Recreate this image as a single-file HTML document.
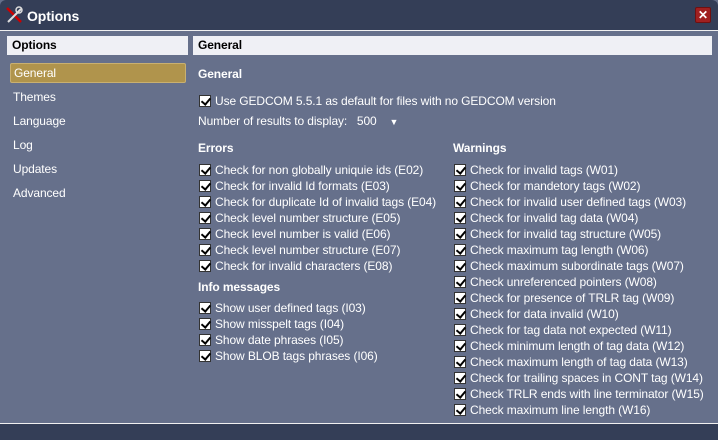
<!DOCTYPE html>
<html><head><style>
*{margin:0;padding:0;box-sizing:border-box}
body{width:718px;height:440px;overflow:hidden;background:#66708b;font-family:"Liberation Sans",sans-serif;font-size:12px;color:#fff;position:relative;letter-spacing:-0.1px}
.abs{position:absolute;white-space:nowrap}
.title{left:0;top:0;width:718px;height:30px;background:#343e57;border-radius:6px 6px 0 0}
.tline{left:0;top:30px;width:718px;height:1px;background:#f0f0f0}
.bot{left:0;top:423px;width:718px;height:17px;background:#343e57;border-top:1px solid #f0f0f0}
.hdr{background:#eff0f5;color:#000;font-weight:bold;height:19px;line-height:19px;padding-left:5px;font-size:12px}
.cb{display:inline-block;width:12px;height:12px;background:#fff;border:1px solid #333;vertical-align:-2px;margin-right:4px;position:relative}
.cb:after{content:"";position:absolute;left:3px;top:0px;width:4px;height:7px;border:solid #000;border-width:0 2px 2px 0;transform:rotate(40deg)}
.row{height:16px;line-height:16px}
b{font-weight:bold}
</style></head><body>
<div class="abs title"></div>
<svg class="abs" style="left:5px;top:6px" width="18" height="18" viewBox="0 0 18 18"><path d="M2 2 L16 16" stroke="#c00" stroke-width="2.5"/><path d="M16 3 L3 16" stroke="#ddd" stroke-width="2"/><circle cx="14" cy="4" r="3" fill="none" stroke="#ddd" stroke-width="1.5"/></svg>
<div class="abs" style="left:27px;top:8px;font-weight:bold;font-size:14px">Options</div>
<div class="abs" style="left:695px;top:7px;width:16px;height:16px;background:#a02020;border-radius:2px;border:1px solid #701010;color:#fff;font-weight:bold;font-size:12px;line-height:14px;text-align:center">✕</div>
<div class="abs tline"></div>
<div class="abs hdr" style="left:7px;top:36px;width:181px">Options</div>
<div class="abs hdr" style="left:193px;top:36px;width:519px">General</div>
<div class="abs" style="left:10px;top:63px;width:176px;height:20px;background:#b0944c;border:1px solid #c9b070;border-radius:2px;padding-left:3px;line-height:18px">General</div>
<div class="abs" style="left:13px;top:90px">Themes</div>
<div class="abs" style="left:13px;top:114px">Language</div>
<div class="abs" style="left:13px;top:138px">Log</div>
<div class="abs" style="left:13px;top:162px">Updates</div>
<div class="abs" style="left:13px;top:186px">Advanced</div>
<div class="abs" style="left:198px;top:67px"><b>General</b></div>
<div class="abs" style="left:199px;top:94px"><span class="cb"></span>Use GEDCOM 5.5.1 as default for files with no GEDCOM version</div>
<div class="abs" style="left:198px;top:114px">Number of results to display:&nbsp;&nbsp; 500 &nbsp;&nbsp;&nbsp;<span style="font-size:9px">▼</span></div>
<div class="abs" style="left:198px;top:141px"><b>Errors</b></div>
<div class="abs" style="left:199px;top:162px">
<div class="row"><span class="cb"></span>Check for non globally uniquie ids (E02)</div>
<div class="row"><span class="cb"></span>Check for invalid Id formats (E03)</div>
<div class="row"><span class="cb"></span>Check for duplicate Id of invalid tags (E04)</div>
<div class="row"><span class="cb"></span>Check level number structure (E05)</div>
<div class="row"><span class="cb"></span>Check level number is valid (E06)</div>
<div class="row"><span class="cb"></span>Check level number structure (E07)</div>
<div class="row"><span class="cb"></span>Check for invalid characters (E08)</div>
</div>
<div class="abs" style="left:198px;top:280px"><b>Info messages</b></div>
<div class="abs" style="left:199px;top:300px">
<div class="row"><span class="cb"></span>Show user defined tags (I03)</div>
<div class="row"><span class="cb"></span>Show misspelt tags (I04)</div>
<div class="row"><span class="cb"></span>Show date phrases (I05)</div>
<div class="row"><span class="cb"></span>Show BLOB tags phrases (I06)</div>
</div>
<div class="abs" style="left:453px;top:141px"><b>Warnings</b></div>
<div class="abs" style="left:454px;top:162px">
<div class="row"><span class="cb"></span>Check for invalid tags (W01)</div>
<div class="row"><span class="cb"></span>Check for mandetory tags (W02)</div>
<div class="row"><span class="cb"></span>Check for invalid user defined tags (W03)</div>
<div class="row"><span class="cb"></span>Check for invalid tag data (W04)</div>
<div class="row"><span class="cb"></span>Check for invalid tag structure (W05)</div>
<div class="row"><span class="cb"></span>Check maximum tag length (W06)</div>
<div class="row"><span class="cb"></span>Check maximum subordinate tags (W07)</div>
<div class="row"><span class="cb"></span>Check unreferenced pointers (W08)</div>
<div class="row"><span class="cb"></span>Check for presence of TRLR tag (W09)</div>
<div class="row"><span class="cb"></span>Check for data invalid (W10)</div>
<div class="row"><span class="cb"></span>Check for tag data not expected (W11)</div>
<div class="row"><span class="cb"></span>Check minimum length of tag data (W12)</div>
<div class="row"><span class="cb"></span>Check maximum length of tag data (W13)</div>
<div class="row"><span class="cb"></span>Check for trailing spaces in CONT tag (W14)</div>
<div class="row"><span class="cb"></span>Check TRLR ends with line terminator (W15)</div>
<div class="row"><span class="cb"></span>Check maximum line length (W16)</div>
</div>
<div class="abs bot"></div>
</body></html>
